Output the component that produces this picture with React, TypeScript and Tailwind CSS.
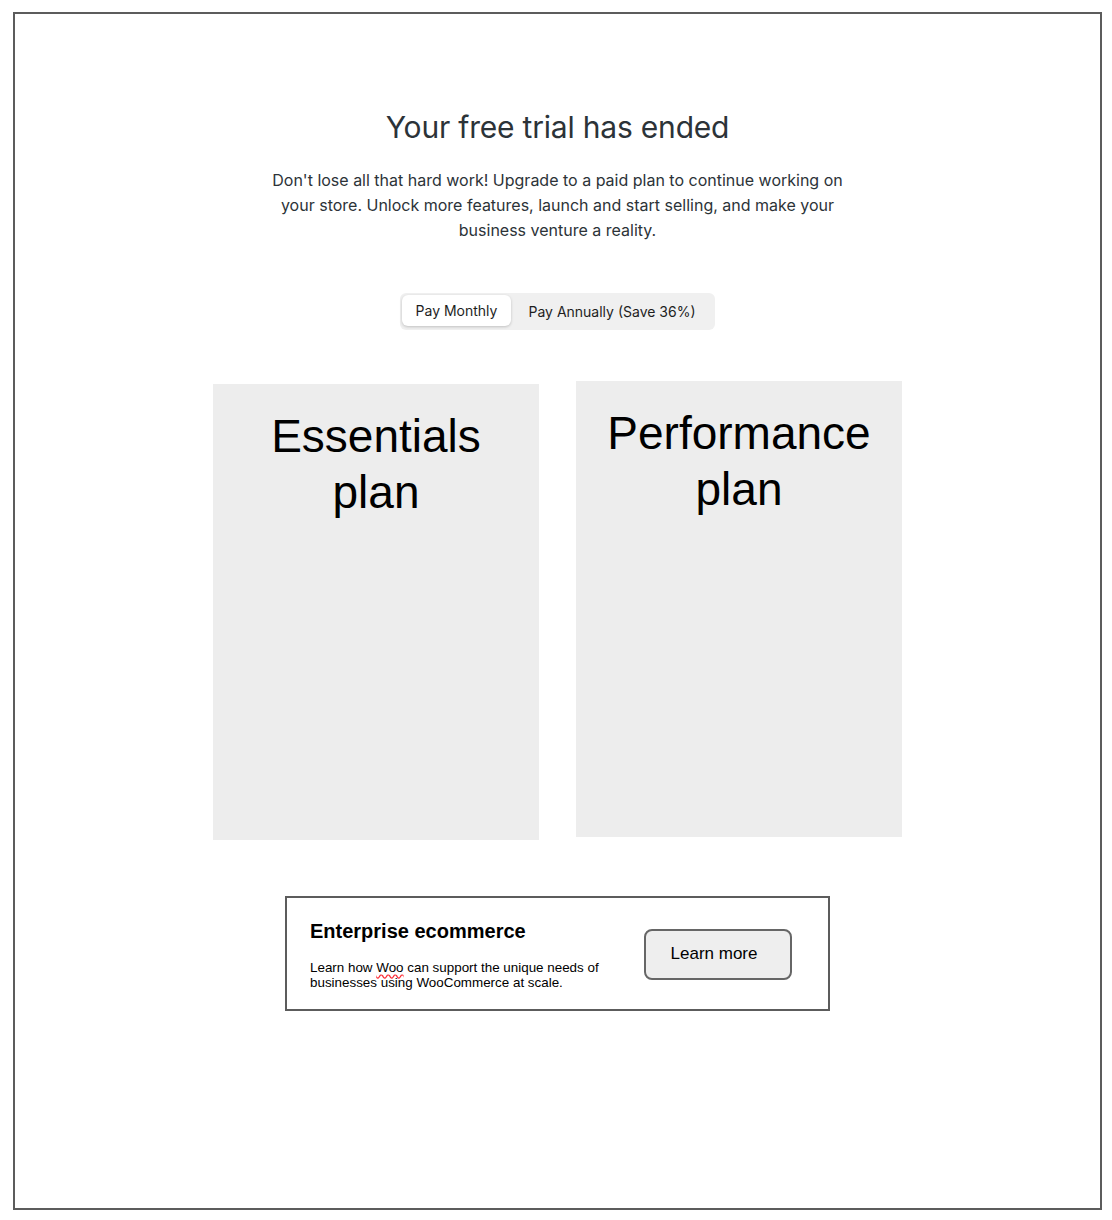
import React, { useState } from 'react';

const App: React.FC = () => {
  const [annual, setAnnual] = useState<boolean>(false);

  return (
    <div className="min-h-[1220px] bg-white pt-[12px] pl-[13px]">
      <div className="w-[1089px] h-[1198px] border-2 border-[#5c5c5c] flex flex-col items-center pt-[93px]">
        {/* Header */}
        <h1 className="font-['Inter',sans-serif] text-[30px] leading-[40px] font-normal text-[#2c3338] tracking-[-0.2px]">
          Your free trial has ended
        </h1>
        <p className="mt-[21px] w-[584px] text-center font-['Inter',sans-serif] text-[16px] leading-[25px] text-[#2c3338]">
          Don't lose all that hard work! Upgrade to a paid plan to continue working on your store. Unlock more
          features, launch and start selling, and make your business venture a reality.
        </p>

        {/* Billing toggle */}
        <div className="mt-[50px] flex items-start h-[37px] w-[315px] rounded-md bg-[#f0f0f0] p-[2px] font-['Inter',sans-serif] text-[14px] text-[#1e1e1e]">
          <button
            onClick={() => setAnnual(false)}
            className={`h-[31px] w-[109px] rounded-md ${!annual ? 'bg-white shadow-[0_1px_3px_rgba(0,0,0,0.2)]' : ''}`}
          >
            Pay Monthly
          </button>
          <button
            onClick={() => setAnnual(true)}
            className={`h-[33px] flex-1 rounded-md ${annual ? 'bg-white shadow-[0_1px_3px_rgba(0,0,0,0.2)]' : ''}`}
          >
            Pay Annually (Save 36%)
          </button>
        </div>

        {/* Plan placeholders */}
        <div className="mt-[51px] flex items-start gap-[37px] font-['Liberation_Sans',Arial,sans-serif] text-black">
          <div className="mt-[3px] w-[326px] h-[456px] bg-[#ededed] pt-[24px] text-center text-[46px] leading-[56px]">
            Essentials
            <br />
            plan
          </div>
          <div className="w-[326px] h-[456px] bg-[#ededed] pt-[24px] text-center text-[46px] leading-[56px]">
            Performance
            <br />
            plan
          </div>
        </div>

        {/* Enterprise */}
        <div className="mt-[56px] w-[545px] h-[115px] border-2 border-[#5c5c5c] flex items-center justify-between pl-[23px] pr-[36px] font-['Liberation_Sans',Arial,sans-serif] text-black">
          <div className="self-start pt-[22px]">
            <h2 className="text-[20px] leading-[22px] font-bold">Enterprise ecommerce</h2>
            <p className="mt-[18px] w-[300px] text-[13.4px] leading-[15px]">
              Learn how <span className="underline decoration-wavy decoration-red-500 underline-offset-2">Woo</span> can
              support the unique needs of businesses using WooCommerce at scale.
            </p>
          </div>
          <button className="mt-[1px] w-[148px] h-[51px] rounded-lg border-2 border-[#666] bg-[#eeeeee] text-[17px] pr-[8px]">
            Learn more
          </button>
        </div>
      </div>
    </div>
  );
};

export default App;
